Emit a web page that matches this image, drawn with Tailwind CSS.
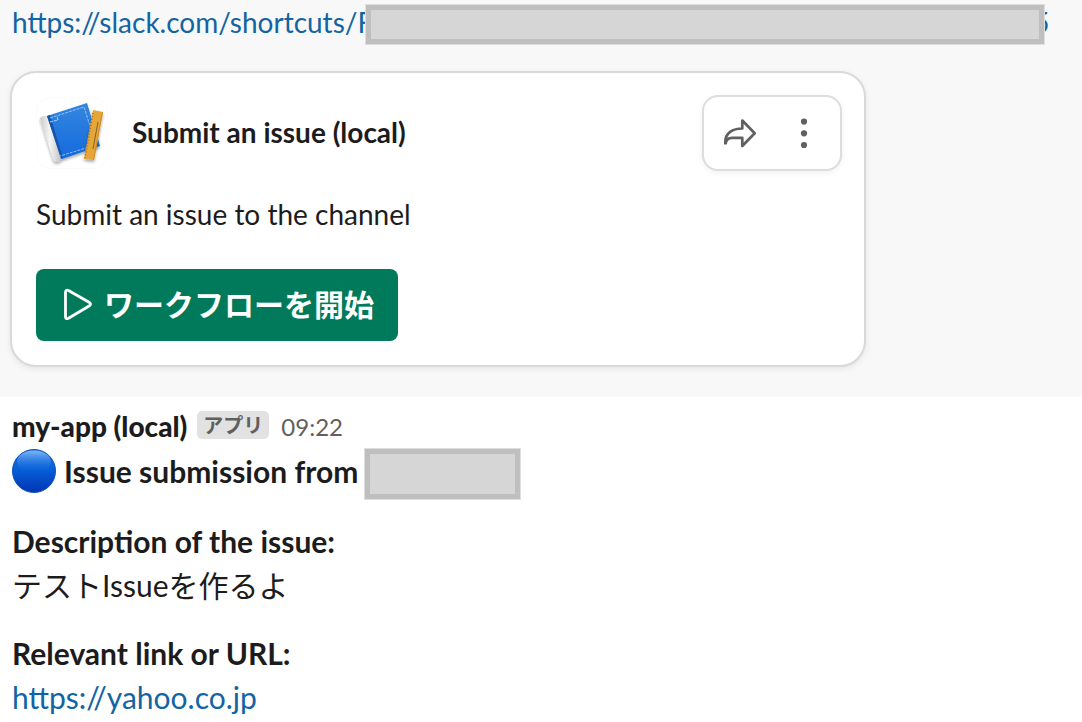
<!DOCTYPE html>
<html lang="ja">
<head>
<meta charset="utf-8">
<meta name="viewport" content="width=device-width, initial-scale=1">
<title>my-app (local)</title>
<script src="https://cdn.jsdelivr.net/npm/@tailwindcss/browser@4"></script>
</head>
<body class="min-h-screen overflow-x-hidden bg-white font-['Lato','Noto_Sans_CJK_JP',sans-serif] text-[30px] leading-[44px] text-[#1d1c1d]">
<section class="bg-[#f8f8f8] px-[10px] pb-[30px]">
  <a href="#" class="flex h-[46px] items-start pl-[2px] text-[28px] whitespace-nowrap text-[#1264a3]">
    <span>https://slack.com/shortcuts/F</span>
    <span class="relative mt-[5px] -ml-[7px] h-[39px] w-[678px] shrink-0 border-[5px] border-[#bfbfbf] bg-[#d6d6d6] outline outline-[#dedede]"></span>
    <span class="-ml-[11px]">5</span>
  </a>

  <article class="mt-[25px] max-w-[856px] rounded-[26px] border-2 border-[#d9d9d9] bg-white px-[24px] pt-[22px] pb-[24px] shadow-[0_2px_6px_rgba(0,0,0,0.08)]">
    <header class="flex items-center">
      <svg class="size-[72px] shrink-0" viewBox="0 0 72 72" aria-hidden="true">
        <defs>
          <linearGradient id="cover" x1="0" y1="0" x2="0" y2="1"><stop offset="0" stop-color="#3487df"/><stop offset="1" stop-color="#1569de"/></linearGradient>
          <linearGradient id="spine" x1="0" y1="0" x2="1" y2="0"><stop offset="0" stop-color="#c9c9c9"/><stop offset=".45" stop-color="#f6f6f6"/><stop offset="1" stop-color="#bdbdbd"/></linearGradient>
          <filter id="soft" x="-20%" y="-20%" width="140%" height="150%"><feDropShadow dx="0" dy="2" stdDeviation="1.5" flood-opacity=".35"/></filter>
        </defs>
        <rect x=".5" y=".5" width="71" height="71" rx="14" fill="#fff" stroke="#fbfbfb"/>
        <g filter="url(#soft)">
          <path d="M4 21q3-3 7-2l15 42q0 3-6 4q-2 0-3-3z" fill="url(#spine)"/>
          <path d="M11 19L51 6l13 43-38 13z" fill="url(#cover)"/>
          <path d="M11 19l3-1 13 43-2 1z" fill="#1555a8"/>
        </g>
        <path d="M14 21L48 10l12 38-36 11" fill="none" stroke="#a9d1ff" stroke-opacity=".8" stroke-dasharray="3 1"/>
        <path d="M14 25l8-2-1-4" fill="none" stroke="#d1e6ff" stroke-opacity=".8" stroke-dasharray="3 1"/>
        <g filter="url(#soft)">
          <path d="M57 13l10 2-9 48-10-1z" fill="#e5a638"/>
          <path d="M66 15l1 0-9 48-1 0z" fill="#cf8c25"/>
        </g>
        <path d="M57 16l-8 45" stroke="#9f681e" stroke-width="1.500" stroke-dasharray="1 2"/>
        <path d="M62 25l-5 27" stroke="#866225" stroke-width="1"/>
      </svg>
      <h2 class="-mt-[2px] ml-[24px] text-[28px] font-bold">Submit an issue (local)</h2>
      <div class="ml-auto -mr-[2px] flex h-[76px] w-[140px] shrink-0 rounded-[16px] border-2 border-[#dddddd] bg-white p-[4px] shadow-[0_2px_6px_rgba(0,0,0,0.06)]">
        <button type="button" aria-label="共有" class="flex flex-1 items-center justify-center text-[#616061]">
          <svg class="size-[36px]" viewBox="0 0 36 36" fill="none" stroke="currentColor" stroke-width="2.700" stroke-linejoin="round" stroke-linecap="butt" aria-hidden="true"><path d="M3.300 29.500V27C3.300 18 10.500 13.500 20.300 13.500V5.500L32.700 18.300 20.300 31V22.800H10C6 22.800 4 25 3.500 29"/></svg>
        </button>
        <button type="button" aria-label="その他" class="flex flex-1 items-center justify-center text-[#616061]">
          <svg class="size-[36px]" viewBox="0 0 36 36" fill="currentColor" aria-hidden="true"><circle cx="18" cy="6.600" r="3.100"/><circle cx="18" cy="18.300" r="3.100"/><circle cx="18" cy="30" r="3.100"/></svg>
        </button>
      </div>
    </header>
    <p class="mt-[21px] text-[28px]">Submit an issue to the channel</p>
    <button type="button" class="mt-[33px] flex h-[72px] items-center rounded-[8px] bg-[#007a5a] pr-[24px] pb-[2px] pl-[24px] font-bold text-white">
      <svg class="mr-[8px] size-[36px]" viewBox="0 0 36 36" fill="none" stroke="currentColor" stroke-width="2.800" stroke-linejoin="round" aria-hidden="true"><path d="M5.500 6.300v24.400q0 3 3 1.500L29.500 19.700q2-1.700 0-3.200L8.500 4.500q-3-1.200-3 1.800z"/></svg>
      ワークフローを開始
    </button>
  </article>
</section>

<section class="px-[12px] pt-[8px]">
  <header class="flex h-[44px] items-center whitespace-nowrap">
    <h2 class="-mt-[2px] text-[28px] font-black">my-app (local)</h2>
    <span class="ml-[10px] -mt-[4px] flex h-[28px] items-center rounded-[5px] bg-[#e2e2e2] px-[6px] text-[20px] font-bold text-[#616061]">アプリ</span>
    <time class="ml-[12px] text-[24px] text-[#616061]">09:22</time>
  </header>
  <div class="flex h-[50px] items-center font-bold whitespace-nowrap">
    <svg class="-mt-[6px] size-[44px] shrink-0" viewBox="0 0 44 44" aria-hidden="true">
      <defs>
        <linearGradient id="ball" x1="0" y1="0" x2="0" y2="1"><stop offset="0" stop-color="#1b6fdc"/><stop offset=".45" stop-color="#0660d8"/><stop offset="1" stop-color="#0033b5"/></linearGradient>
        <linearGradient id="gloss" x1="0" y1="0" x2="0" y2="1"><stop offset="0" stop-color="#7db8f7"/><stop offset="1" stop-color="#0a62d9" stop-opacity="0"/></linearGradient>
      </defs>
      <circle cx="22" cy="22" r="21.500" fill="url(#ball)" stroke="#0b54b5"/>
      <ellipse cx="22" cy="13" rx="17" ry="11.500" fill="url(#gloss)"/>
    </svg>
    <span class="ml-[8px] -mt-[6px]">Issue submission from</span>
    <span class="ml-[7px] h-[50px] w-[155px] border-[5px] border-[#bfbfbf] bg-[#d6d6d6] outline outline-[#dedede]"></span>
  </div>
  <div class="mt-[20px]">
    <h3 class="font-bold">Description of the issue:</h3>
    <p>テストIssueを作るよ</p>
  </div>
  <div class="mt-[24px]">
    <h3 class="font-bold">Relevant link or URL:</h3>
    <a href="#" class="block text-[#1264a3]">https://yahoo.co.jp</a>
  </div>
</section>
</body>
</html>
